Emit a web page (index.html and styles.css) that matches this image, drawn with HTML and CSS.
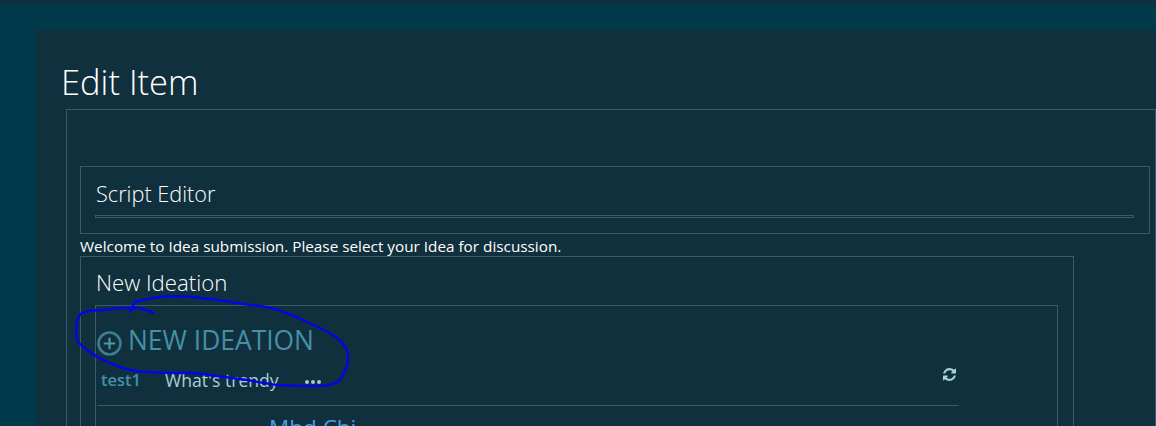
FILE: index.html
```html
<!DOCTYPE html>
<html lang="en">
<head>
<meta charset="utf-8">
<title>Edit Item</title>
<link rel="stylesheet" href="styles.css">
</head>
<body>
<div class="topbar"></div>
<main class="panel">
  <h1 class="title">Edit Item</h1>
  <div class="outer">
    <section class="script-box">
      <h2 class="heading">Script Editor</h2>
      <div class="double-rule"></div>
    </section>
    <p class="welcome">Welcome to Idea submission. Please select your Idea for discussion.</p>
    <section class="ideation-box">
      <h2 class="heading">New Ideation</h2>
      <div class="inner">
        <a class="new-btn">
          <svg class="plus" viewBox="0 0 26 26" aria-hidden="true"><circle cx="13" cy="13" r="11.4" fill="none" stroke="currentColor" stroke-width="2.6"/><path d="M13 7v12M7 13h12" stroke="#4f96ab" stroke-width="2.2" fill="none"/></svg>
          <span>NEW IDEATION</span>
        </a>
        <div class="tabs">
          <span class="tab-active">test1</span>
          <span class="tab">What's trendy</span>
          <span class="dots"><i></i><i></i><i></i></span>
          <svg class="refresh" viewBox="0 0 1536 1536" aria-hidden="true"><path fill="currentColor" d="M1511 928q0 5-1 7-64 268-268 434.500T764 1536q-146 0-282.500-55T238 1324l-129 129q-19 19-45 19t-45-19-19-45V960q0-26 19-45t45-19h448q26 0 45 19t19 45-19 45l-137 137q71 66 161 102t187 36q134 0 250-65t186-179q11-17 53-117 8-23 30-23h192q13 0 22.500 9.500t9.500 22.500zm25-800v448q0 26-19 45t-45 19h-448q-26 0-45-19t-19-45 19-45l138-138Q969 256 768 256q-134 0-250 65T332 500q-11 17-53 117-8 23-30 23H50q-13 0-22.500-9.500T18 608v-7q65-268 270-434.500T768 0q146 0 284 55.500T1297 212l130-129q19-19 45-19t45 19 19 45z"/></svg>
        </div>
        <div class="row-rule"></div>
        <a class="person">Mhd Chi</a>
      </div>
    </section>
  </div>
</main>
<svg class="ink" viewBox="0 0 1156 426" aria-hidden="true">
  <path d="M153 313C148 310 143 309 137 308C125 307 113 309 103 310C95 310 87 311 82 313C78 316 77 319 77 323C76 329 76 335 77 340C79 344 83 347 87 350C92 354 97 357 103 360C110 363 116 366 123 368C130 370 139 372 147 372C165 373 180 373 193 373C212 375 230 378 247 380C258 382 267 384 277 385C292 386 306 386 320 386C329 386 335 384 340 380C343 376 344 373 345 370C347 367 348 364 348 360C348 356 348 353 347 350C344 344 339 339 333 335C325 330 316 326 307 322C295 316 283 311 270 308C261 306 252 305 243 304C232 302 221 300 210 299C197 297 183 296 170 296C157 297 145 299 135 302C133 305 132 308 130 312" fill="none" stroke="#0404e8" stroke-width="2.4" stroke-linecap="round" stroke-linejoin="round"/>
</svg>
</body>
</html>
```
FILE: styles.css
```css
* { box-sizing: border-box; }
html, body { margin: 0; height: 426px; overflow: hidden; }
body { background: #003a4b; font-family: "Open Sans", "Noto Sans", sans-serif; color: #fff; position: relative; }
.topbar { height: 5px; background: #10303d; }
.panel { margin: 25px 0 0 36px; background: #10303d; height: 396px; padding: 28px 0 0 25px; overflow: hidden; }
.title { margin: 0; font-size: 34.5px; font-weight: 300; line-height: 48px; height: 51px; }
.outer { margin-left: 5px; width: 1090px; height: 400px; border: 1px solid #3c5a63; padding: 56px 0 0 13px; }
.script-box { width: 1070px; height: 68px; border: 1px solid #3c5a63; padding: 11px 15px 0 14px; }
.heading { margin: 0 0 0 1px; font-size: 21.7px; font-weight: 300; line-height: 32px; height: 37px; }
.double-rule { height: 3px; border: 1px solid #3c5a63; }
.welcome { margin: 3px 0 0; font-size: 15.3px; line-height: 18px; height: 18px; }
.ideation-box { margin-top: 1px; width: 994px; height: 300px; border: 1px solid #3c5a63; padding: 10px 15px 0 14px; }
.ideation-box .heading { font-size: 22.2px; height: 38px; }
.inner { height: 200px; border: 1px solid #3c5a63; position: relative; padding: 0 0 0 1px; }
.new-btn { display: flex; align-items: center; gap: 6px; color: #458fa7; font-size: 26.4px; font-weight: 400; line-height: 36px; margin-top: 16px; }
.plus { width: 25px; height: 25px; margin-top: 7px; color: #3f7e92; }
.tabs { display: flex; align-items: center; height: 24px; margin-top: 10px; padding-left: 4px; width: 862px; line-height: 24px; }
.tab-active { color: #458fa7; font-size: 16.5px; font-weight: 600; margin-right: 24px; }
.tab { color: #a9d0d6; font-size: 17.6px; font-weight: 400; }
.dots { display: flex; gap: 2px; margin-left: 26px; margin-top: 4px; }
.dots i { width: 4px; height: 4px; border-radius: 50%; background: #a9c6cc; }
.refresh { width: 13px; height: 13px; margin-left: auto; margin-right: 3px; color: #a9d0d6; margin-top: -11px; }
.row-rule { height: 1px; width: 862px; background: #3c5a63; margin-top: 13px; }
.person { display: block; margin: 9px 0 0 172px; color: #4a9fe6; font-size: 22.5px; font-weight: 400; line-height: 26px; }
.ink { position: absolute; left: 0; top: 0; width: 1156px; height: 426px; pointer-events: none; }
```
